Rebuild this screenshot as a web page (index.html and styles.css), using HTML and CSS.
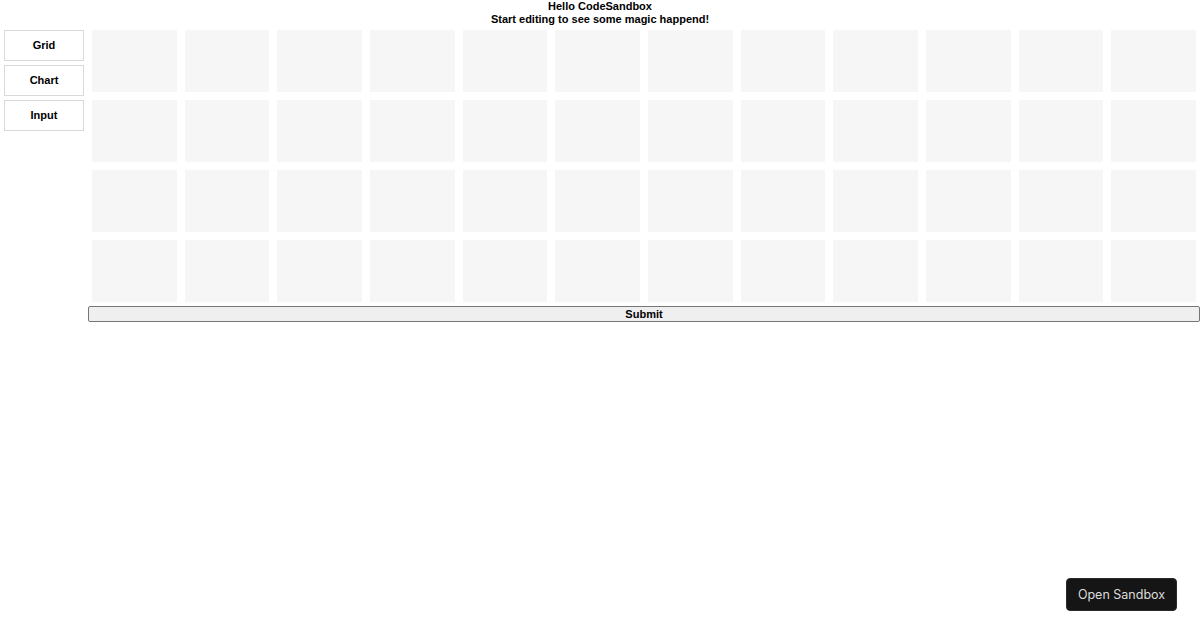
FILE: index.html
```html
<!DOCTYPE html>
<html>
<head>
<meta charset="utf-8">
<link rel="stylesheet" href="styles.css">
</head>
<body>
<div class="app">
  <header class="title">
    <div>Hello CodeSandbox</div>
    <div>Start editing to see some magic happend!</div>
  </header>
  <div class="main">
    <nav class="nav">
      <div class="nav-btn">Grid</div>
      <div class="nav-btn">Chart</div>
      <div class="nav-btn">Input</div>
    </nav>
    <section class="content">
      <div class="grid" id="grid"></div>
      <button class="submit">Submit</button>
    </section>
  </div>
</div>
<a class="open-sandbox">Open Sandbox</a>
<script>
  var g = document.getElementById('grid');
  for (var i = 0; i < 48; i++) {
    var c = document.createElement('div');
    c.className = 'cell';
    g.appendChild(c);
  }
</script>
</body>
</html>
```
FILE: styles.css
```css
html, body {
  margin: 0;
  padding: 0;
  background: #fff;
}
body {
  font-family: "Liberation Sans", Arial, sans-serif;
  color: #000;
}
.title {
  text-align: center;
  font-weight: bold;
  font-size: 11px;
  line-height: 13px;
}
.main {
  display: flex;
}
.nav {
  width: 88px;
  flex: none;
  display: flex;
  flex-direction: column;
  gap: 4px;
  padding: 4px;
  box-sizing: border-box;
}
.nav-btn {
  height: 31px;
  padding-bottom: 2px;
  border: 1px solid #d9d9d9;
  box-sizing: border-box;
  display: flex;
  align-items: center;
  justify-content: center;
  font-size: 11px;
  font-weight: bold;
}
.content {
  flex: 1;
  display: flex;
  flex-direction: column;
}
.grid {
  display: grid;
  grid-template-columns: repeat(12, 1fr);
  grid-auto-rows: 62px;
  gap: 8px;
  padding: 4px;
}
.cell {
  background: #f6f6f6;
}
.submit {
  height: 16px;
  margin: 0;
  padding: 0;
  font-family: "Liberation Sans", Arial, sans-serif;
  font-size: 11px;
  font-weight: bold;
  line-height: 14px;
  color: #000;
  background: #efefef;
  border: 1px solid #767676;
  border-radius: 2px;
}
.open-sandbox {
  position: fixed;
  right: 23px;
  bottom: 19px;
  width: 111px;
  height: 33px;
  box-sizing: border-box;
  background: #151515;
  color: #dcdcdc;
  border-radius: 4px;
  border: 1px solid #2a2a2a;
  font-family: Inter, "Liberation Sans", sans-serif;
  font-size: 12.5px;
  display: flex;
  align-items: center;
  justify-content: center;
}
```
